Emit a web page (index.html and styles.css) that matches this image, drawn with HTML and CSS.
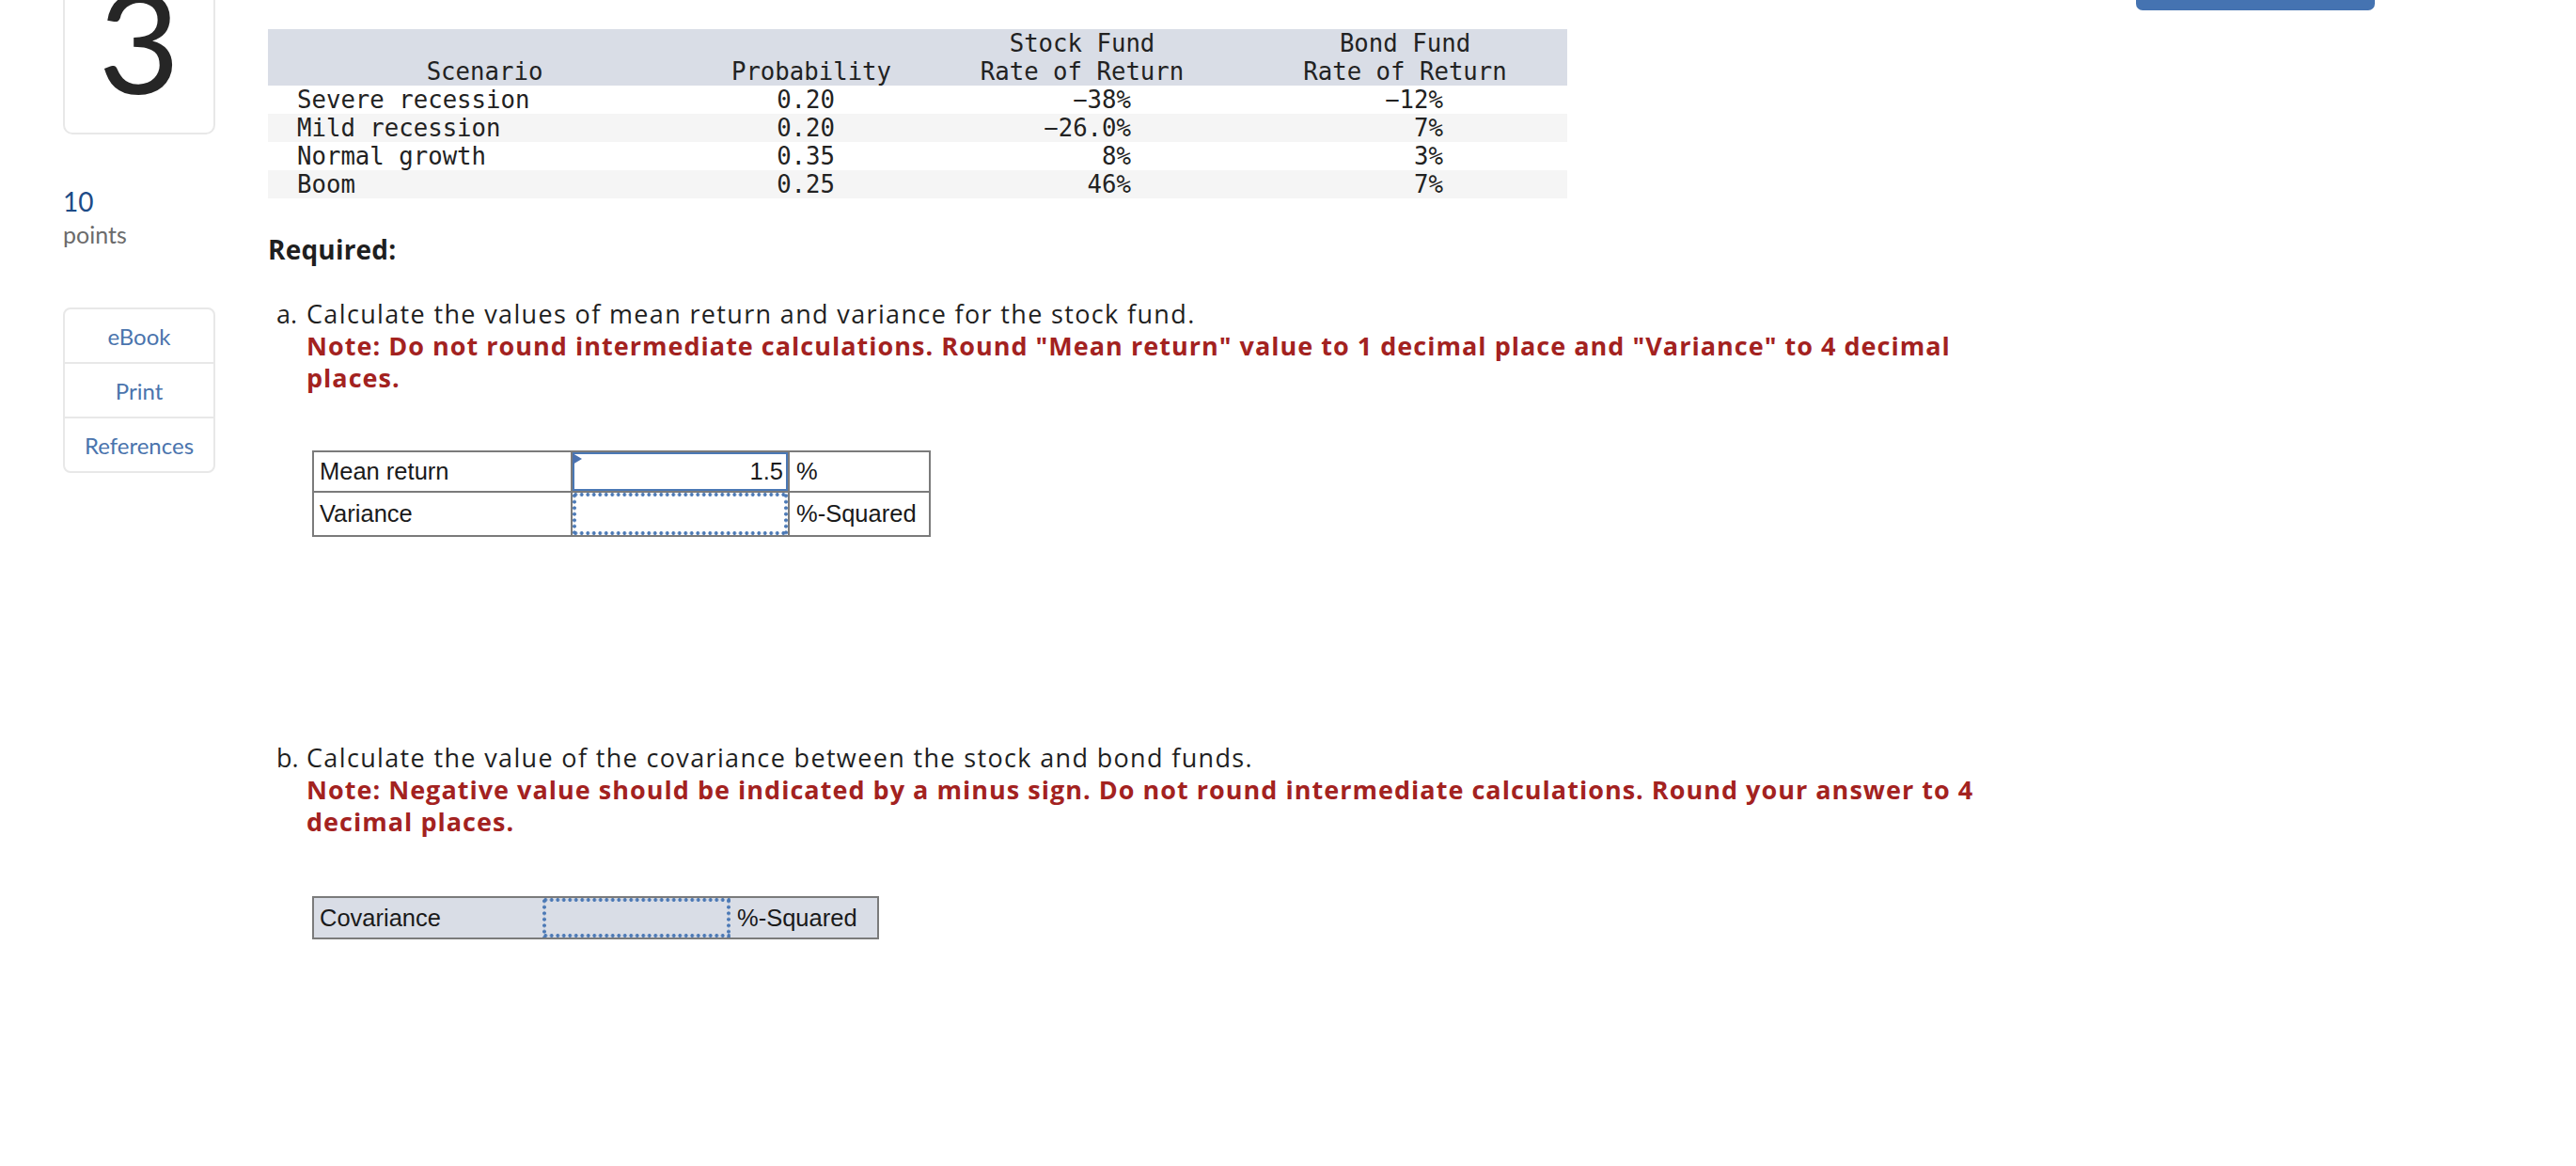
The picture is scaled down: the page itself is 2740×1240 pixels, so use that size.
FILE: index.html
```html
<!DOCTYPE html>
<html lang="en">
<head>
<meta charset="utf-8">
<title>Question 3</title>
<link rel="stylesheet" href="styles.css">
</head>
<body>
<div class="page">
  <aside class="sidebar">
    <div class="qnum">3</div>
    <div class="points">
      <span class="points-value">10</span>
      <span class="points-label">points</span>
    </div>
    <ul class="tools">
      <li>eBook</li>
      <li>Print</li>
      <li>References</li>
    </ul>
  </aside>

  <main class="content">
    <table class="data">
      <colgroup>
        <col class="c1"><col class="c2"><col class="c3"><col class="c4">
      </colgroup>
      <thead>
        <tr>
          <th>Scenario</th>
          <th>Probability</th>
          <th>Stock Fund<br>Rate of Return</th>
          <th>Bond Fund<br>Rate of Return</th>
        </tr>
      </thead>
      <tbody>
        <tr><td class="name">Severe recession</td><td class="prob">0.20</td><td class="stock">−38%</td><td class="bond">−12%</td></tr>
        <tr><td class="name">Mild recession</td><td class="prob">0.20</td><td class="stock">−26.0%</td><td class="bond">7%</td></tr>
        <tr><td class="name">Normal growth</td><td class="prob">0.35</td><td class="stock">8%</td><td class="bond">3%</td></tr>
        <tr><td class="name">Boom</td><td class="prob">0.25</td><td class="stock">46%</td><td class="bond">7%</td></tr>
      </tbody>
    </table>

    <p class="required">Required:</p>

    <div class="part">
      <span class="part-label">a.</span>
      <div class="part-body">
        <p class="prompt">Calculate the values of mean return and variance for the stock fund.</p>
        <p class="note">Note: Do not round intermediate calculations. Round "Mean return" value to 1 decimal place and "Variance" to 4 decimal places.</p>
      </div>
    </div>

    <div class="answer answer-ab">
      <div class="cell label">Mean return</div>
      <div class="cell field solid"><span class="flag"></span>1.5</div>
      <div class="cell unit">%</div>
      <div class="cell label">Variance</div>
      <div class="cell field dotted"></div>
      <div class="cell unit">%-Squared</div>
    </div>

    <div class="part part-b">
      <span class="part-label">b.</span>
      <div class="part-body">
        <p class="prompt">Calculate the value of the covariance between the stock and bond funds.</p>
        <p class="note">Note: Negative value should be indicated by a minus sign. Do not round intermediate calculations. Round your answer to 4 decimal places.</p>
      </div>
    </div>

    <div class="answer answer-cov">
      <div class="cell label">Covariance</div>
      <div class="cell field dotted"></div>
      <div class="cell unit">%-Squared</div>
    </div>
  </main>

  <div class="actions">
    <button class="top-btn" type="button" aria-label="Action"></button>
  </div>
</div>
</body>
</html>
```

FILE: styles.css
```css
html, body {
  margin: 0;
  padding: 0;
  background: #ffffff;
}

body {
  font-family: Lato, "Open Sans", Arial, sans-serif;
  color: #1f1f1f;
  overflow: hidden;
}

.page {
  display: flex;
  align-items: flex-start;
  padding-left: 67px;
}

/* ---------- sidebar ---------- */
.sidebar {
  flex: 0 0 162px;
  margin-right: 56px;
  display: flex;
  flex-direction: column;
}

.qnum {
  box-sizing: border-box;
  height: 203px;
  margin-top: -60px;
  padding-top: 25px;
  border: 2px solid #e8e8e8;
  border-radius: 10px;
  text-align: center;
  font-size: 150px;
  line-height: 150px;
  color: #262626;
}

.points {
  display: flex;
  flex-direction: column;
  margin-top: 54px;
}

.points-value {
  font-size: 28px;
  line-height: 34px;
  color: #1d4b87;
}

.points-label {
  font-size: 25px;
  line-height: 36px;
  color: #6b6b6b;
}

.tools {
  list-style: none;
  margin: 60px 0 0;
  padding: 0;
  border: 2px solid #e8e8e8;
  border-radius: 8px;
}

.tools li {
  height: 56px;
  display: flex;
  align-items: center;
  justify-content: center;
  font-size: 24px;
  color: #4a74ad;
}

.tools li + li {
  border-top: 2px solid #e8e8e8;
}

/* ---------- content ---------- */
.content {
  flex: 0 0 1860px;
}

.data {
  margin-top: 31px;
  width: 1382px;
  table-layout: fixed;
  border-collapse: collapse;
  border-spacing: 0;
  font-family: "DejaVu Sans Mono", monospace;
  font-size: 25.7px;
  line-height: 30px;
  color: #222222;
}

.data .c1 { width: 461px; }
.data .c2 { width: 234px; }
.data .c3 { width: 342px; }
.data .c4 { width: 345px; }

.data th {
  padding: 0;
  font-weight: normal;
  text-align: center;
  vertical-align: bottom;
  background: #d9dde6;
}

.data td {
  padding: 0;
  height: 30px;
  text-align: right;
  white-space: pre;
}

.data tbody tr:nth-child(even) td {
  background: #f5f5f5;
}

.data td.name { text-align: left; padding-left: 31px; }
.data td.prob { padding-right: 92px; }
.data td.stock { padding-right: 119px; }
.data td.bond { padding-right: 132px; }

.required {
  margin: 37px 0 0;
  font-family: "Open Sans", Lato, sans-serif;
  font-size: 28px;
  line-height: 34px;
  font-weight: 700;
  letter-spacing: 0.2px;
  color: #1f1f1f;
}

.part {
  display: grid;
  grid-template-columns: 32px 1fr;
  padding-left: 9px;
  margin-top: 35px;
  font-family: "Open Sans", Lato, sans-serif;
  font-size: 27px;
  line-height: 34px;
}

.part p {
  margin: 0;
}

.prompt {
  color: #1f1f1f;
  letter-spacing: 1.35px;
}

.note {
  color: #a3221f;
  font-weight: 700;
  letter-spacing: 1.02px;
}

.part-b {
  margin-top: 218px;
}

/* ---------- answer grids ---------- */
.answer {
  display: grid;
  margin-left: 47px;
  font-family: "Liberation Sans", Arial, sans-serif;
  font-size: 25.5px;
  color: #1a1a1a;
}

.answer-ab {
  margin-top: 60px;
  width: 658px;
  box-sizing: border-box;
  padding: 2px;
  gap: 2px;
  background-color: #7b7b7b;
  grid-template-columns: 273px 229px 148px;
  grid-template-rows: 41px 45px;
}

.answer-ab .cell {
  background-color: #ffffff;
}

.cell {
  display: flex;
  align-items: center;
  box-sizing: border-box;
}

.cell.label {
  padding-left: 6px;
}

.cell.unit {
  padding-left: 7px;
}

.field {
  position: relative;
  justify-content: flex-end;
  padding-right: 3px;
  border: 2px solid #4a78b5;
}

.field.dotted {
  border: 0;
  background-image:
    radial-gradient(circle, #4a78b5 42%, transparent 58%),
    radial-gradient(circle, #4a78b5 42%, transparent 58%),
    radial-gradient(circle, #4a78b5 42%, transparent 58%),
    radial-gradient(circle, #4a78b5 42%, transparent 58%);
  background-size: 6.5px 4px, 6.5px 4px, 4px 6.5px, 4px 6.5px;
  background-position: 0 0, 0 100%, 0 0, 100% 0;
  background-repeat: repeat-x, repeat-x, repeat-y, repeat-y;
}

.flag {
  position: absolute;
  left: -2px;
  top: -1px;
  width: 0;
  height: 0;
  border-top: 6px solid transparent;
  border-bottom: 6px solid transparent;
  border-left: 10px solid #4a72b0;
}

.answer-cov {
  margin-top: 62px;
  width: 603px;
  box-sizing: border-box;
  border: 2px solid #7b7b7b;
  background-color: #d9dde6;
  grid-template-columns: 243px 200px 156px;
  grid-template-rows: 42px;
}

/* ---------- top-right action ---------- */
.actions {
  margin-left: 127px;
  flex: 0 0 254px;
}

.top-btn {
  display: block;
  width: 254px;
  height: 50px;
  margin-top: -39px;
  border: 0;
  border-radius: 7px;
  background: #4573b1;
  padding: 0;
}
```
